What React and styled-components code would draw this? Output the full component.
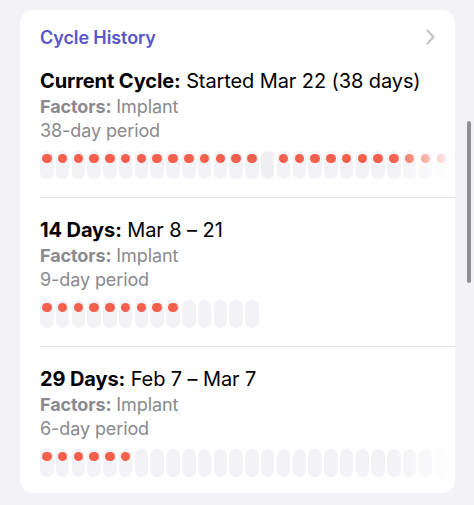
import React from "react";
import styled, { createGlobalStyle } from "styled-components";

const GlobalStyle = createGlobalStyle`
  html, body {
    margin: 0;
    padding: 0;
    background: #f2f2f7;
  }
  body {
    font-family: Inter, "Noto Sans", sans-serif;
    -webkit-font-smoothing: antialiased;
  }
`;

const cycles = [
  {
    label: "Current Cycle:",
    range: "Started Mar 22 (38 days)",
    period: "38-day period",
    days: 38,
    filled: (i) => i !== 14,
  },
  {
    label: "14 Days:",
    range: "Mar 8 – 21",
    period: "9-day period",
    days: 14,
    filled: (i) => i < 9,
  },
  {
    label: "29 Days:",
    range: "Feb 7 – Mar 7",
    period: "6-day period",
    days: 29,
    filled: (i) => i < 6,
  },
];

export default function App() {
  return (
    <>
      <GlobalStyle />
      <Page>
        <Card>
          <CardHeader>
            <Title>Cycle History</Title>
            <Chevron width="9" height="16" viewBox="0 0 9 16">
              <polyline
                points="1.5,1.5 7.5,8 1.5,14.5"
                fill="none"
                stroke="#c4c4c8"
                strokeWidth="2.2"
                strokeLinecap="round"
                strokeLinejoin="round"
              />
            </Chevron>
          </CardHeader>
          {cycles.map((c, idx) => (
            <Section key={idx} $last={idx === cycles.length - 1} $first={idx === 0}>
              <Heading>
                <strong>{c.label}</strong> {c.range}
              </Heading>
              <Meta>
                <strong>Factors:</strong> Implant
              </Meta>
              <Meta>{c.period}</Meta>
              <DayRow>
                {Array.from({ length: c.days }).map((_, i) => (
                  <DayPill key={i} $gap={idx === 0 && i === 14}>
                    {c.filled(i) && <Dot />}
                  </DayPill>
                ))}
              </DayRow>
            </Section>
          ))}
        </Card>
        <ScrollIndicator />
      </Page>
    </>
  );
}

const Page = styled.div`
  position: relative;
  min-height: 505px;
  box-sizing: border-box;
  padding: 10px 19px 0 20px;
`;

const Card = styled.div`
  background: #ffffff;
  border-radius: 13px;
  overflow: hidden;
  padding-left: 20px;
`;

const CardHeader = styled.div`
  display: flex;
  align-items: center;
  justify-content: space-between;
  height: 22px;
  padding: 16px 20px 0 0;
`;

const Title = styled.div`
  color: #5a55c8;
  font-size: 18px;
  font-weight: 600;
  letter-spacing: -0.1px;
`;

const Chevron = styled.svg`
  display: block;
`;

const Section = styled.div`
  padding-top: ${(p) => (p.$first ? "20px" : "19px")};
  padding-bottom: ${(p) => (p.$last ? "16px" : "18px")};
  border-bottom: ${(p) => (p.$last ? "none" : "1px solid #e3e3e8")};
`;

const Heading = styled.div`
  font-size: 20px;
  line-height: 26px;
  margin-bottom: 1px;
  color: #000;
  letter-spacing: -0.1px;

  strong {
    font-weight: 700;
  }
`;

const Meta = styled.div`
  font-size: 18px;
  line-height: 24px;
  color: #8a8a8e;
  letter-spacing: -0.1px;

  strong {
    font-weight: 700;
  }
`;

const DayRow = styled.div`
  display: flex;
  gap: 2.29px;
  margin-top: 8px;
  overflow: hidden;
  -webkit-mask-image: linear-gradient(to right, #000 calc(100% - 62px), transparent 100%);
  mask-image: linear-gradient(to right, #000 calc(100% - 62px), transparent 100%);
`;

const DayPill = styled.div`
  flex: 0 0 13.5px;
  height: 28px;
  border-radius: 7px;
  background: ${(p) => (p.$gap ? "#efeff4" : "#f2f2f7")};
  display: flex;
  justify-content: center;
  padding-top: 2.5px;
  box-sizing: border-box;
`;

const Dot = styled.div`
  width: 9.5px;
  height: 9.5px;
  border-radius: 50%;
  background: #f4604b;
`;

const ScrollIndicator = styled.div`
  position: absolute;
  top: 121px;
  right: 3px;
  width: 4px;
  height: 162px;
  border-radius: 2px;
  background: #909095;
`;
